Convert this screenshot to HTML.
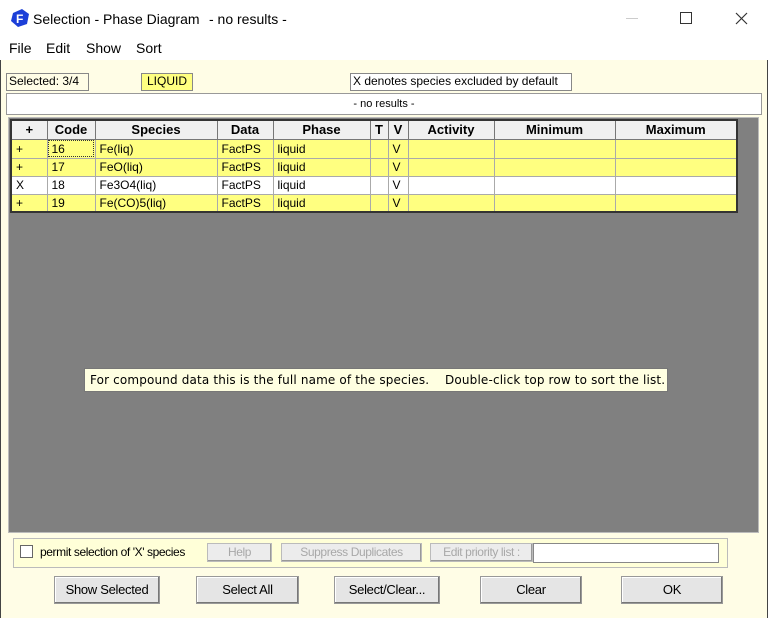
<!DOCTYPE html>
<html><head><style>
*{margin:0;padding:0;box-sizing:border-box}
body{width:768px;height:618px;overflow:hidden;background:#fffde6;font-family:"Liberation Sans",sans-serif;position:relative}
.a{position:absolute}
.win{left:0;top:0;width:768px;height:618px;border:1px solid #444;border-bottom:none}
.title{left:0;top:0;width:768px;height:35px;background:#fff;font-family:"Liberation Sans",sans-serif;font-size:14px;color:#000}
.menu{left:0;top:35px;width:768px;height:25px;background:#fff;font-family:"Liberation Sans",sans-serif;font-size:14px}
.lbl{font-size:12px;border:1px solid #888;background:#fffde6;padding:0 2px;line-height:15px;height:18px}
.grid{left:10px;top:119px;border-collapse:collapse;font-size:12px;position:absolute}
.grid td{border:1px solid #aaa;height:18px;line-height:16px;padding:0 4px;white-space:nowrap;overflow:hidden}
.grid th{border:1px solid #777;background:#f0f0f0;height:19px;line-height:16px;font-size:13px;font-weight:bold}
.grid tr.t td{height:19px}
.y td{background:#ffff80}
.w td{background:#fff}
.btn{position:absolute;top:576px;height:28px;background:#e5e5e5;border:1px solid #999;box-shadow:inset -1px -1px #777,inset 1px 1px #fff;font-size:13px;text-align:center;line-height:26px;letter-spacing:-0.3px}
.dbtn{position:absolute;top:543px;height:19px;background:#ececec;border:1px solid #bbb;box-shadow:inset -1px -1px #999;color:#a8a8a8;font-size:12px;text-align:center;line-height:17px;letter-spacing:-0.4px}
</style></head><body>
<div class="a win"></div>
<div class="a title">
 <svg class="a" style="left:10px;top:8px" width="20" height="20" viewBox="0 0 20 20"><path d="M3 5 L12 1 L19 6 L17 16 L8 19 L1 13 Z" fill="#1c3fd8"/><text x="6" y="15" font-size="12" font-weight="bold" fill="#fff" font-family="Liberation Sans">F</text></svg>
 <span class="a" style="left:33px;top:11px">Selection - Phase Diagram</span>
 <span class="a" style="left:209px;top:11px">- no results -</span>
 <div class="a" style="left:626px;top:18px;width:12px;height:1px;background:#ccc"></div>
 <div class="a" style="left:680px;top:12px;width:12px;height:12px;border:1px solid #333"></div>
 <svg class="a" style="left:735px;top:12px" width="13" height="13"><path d="M1 1L12 12M12 1L1 12" stroke="#333" stroke-width="1.2"/></svg>
</div>
<div class="a menu"><span class="a" style="left:9px;top:5px">File</span><span class="a" style="left:46px;top:5px">Edit</span><span class="a" style="left:86px;top:5px">Show</span><span class="a" style="left:136px;top:5px">Sort</span></div>
<div class="a lbl" style="left:6px;top:73px;width:83px">Selected: 3/4</div>
<div class="a lbl" style="left:141px;top:73px;width:52px;background:#ffff80;text-align:center">LIQUID</div>
<div class="a lbl" style="left:350px;top:73px;width:222px;background:#fff">X denotes species excluded by default</div>
<div class="a" style="left:6px;top:93px;width:756px;height:22px;background:#fff;border:1px solid #999;font-size:11px;text-align:center;line-height:20px">- no results -</div>
<div class="a" style="left:8px;top:117px;width:751px;height:416px;background:#808080;border:1px solid #bbb"></div>
<table class="grid" style="width:726px;table-layout:fixed;border:2px solid #333">
<colgroup><col style="width:36px"><col style="width:48px"><col style="width:122px"><col style="width:56px"><col style="width:97px"><col style="width:18px"><col style="width:20px"><col style="width:86px"><col style="width:121px"><col style="width:122px"></colgroup>
<tr><th>+</th><th>Code</th><th>Species</th><th>Data</th><th>Phase</th><th>T</th><th>V</th><th>Activity</th><th>Minimum</th><th>Maximum</th></tr>
<tr class="y t"><td>+</td><td style="outline:1px dotted #333;outline-offset:-2px">16</td><td>Fe(liq)</td><td>FactPS</td><td>liquid</td><td></td><td>V</td><td></td><td></td><td></td></tr>
<tr class="y"><td>+</td><td>17</td><td>FeO(liq)</td><td>FactPS</td><td>liquid</td><td></td><td>V</td><td></td><td></td><td></td></tr>
<tr class="w"><td>X</td><td>18</td><td>Fe3O4(liq)</td><td>FactPS</td><td>liquid</td><td></td><td>V</td><td></td><td></td><td></td></tr>
<tr class="y"><td>+</td><td>19</td><td>Fe(CO)5(liq)</td><td>FactPS</td><td>liquid</td><td></td><td>V</td><td></td><td></td><td></td></tr>
</table>
<div class="a" style="left:84px;top:368px;width:584px;height:24px;background:#ffffe1;border:1px solid #777;font-family:'DejaVu Sans',sans-serif;font-size:12px;line-height:22px;padding-left:5px;white-space:nowrap;letter-spacing:0.15px">For compound data this is the full name of the species.&nbsp;&nbsp;&nbsp; Double-click top row to sort the list.</div>
<div class="a" style="left:13px;top:538px;width:715px;height:30px;border:1px solid #bbb;background:#ffffd8"></div>
<div class="a" style="left:20px;top:545px;width:13px;height:13px;border:1px solid #666;background:#fff"></div>
<span class="a" style="left:40px;top:545px;font-size:12px;letter-spacing:-0.4px">permit selection of 'X' species</span>
<div class="dbtn" style="left:207px;width:65px">Help</div>
<div class="dbtn" style="left:281px;width:141px">Suppress Duplicates</div>
<div class="dbtn" style="left:430px;width:103px">Edit priority list :</div>
<div class="a" style="left:533px;top:543px;width:186px;height:20px;background:#fff;border:1px solid #888"></div>
<div class="btn" style="left:54px;width:106px">Show Selected</div>
<div class="btn" style="left:196px;width:103px">Select All</div>
<div class="btn" style="left:334px;width:106px">Select/Clear...</div>
<div class="btn" style="left:480px;width:102px">Clear</div>
<div class="btn" style="left:621px;width:102px">OK</div>
</body></html>
